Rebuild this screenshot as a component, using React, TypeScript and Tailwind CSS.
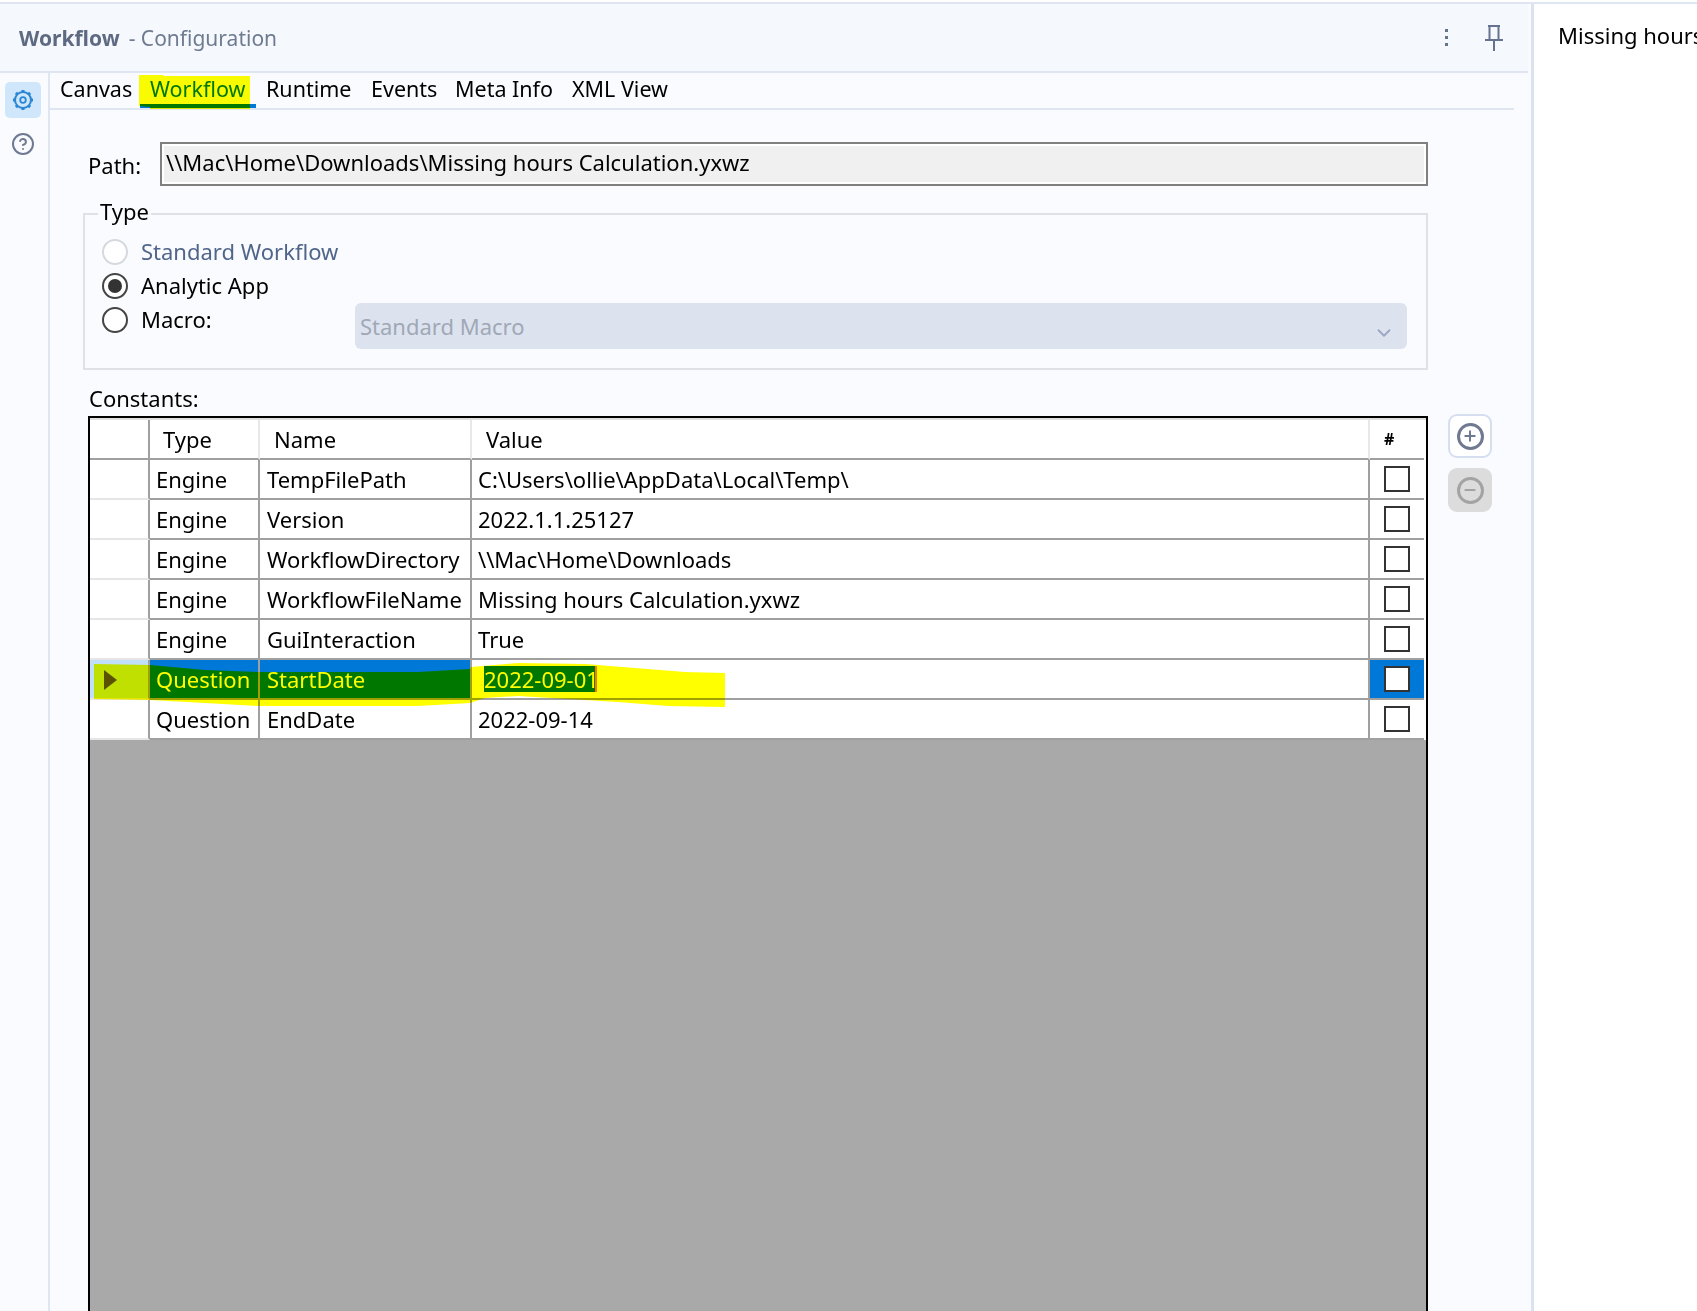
import { CircleHelp, ChevronDown, Plus, Minus } from 'lucide-react';

const tabs = [
  { label: 'Canvas', width: 'w-[90px]' },
  { label: 'Workflow', width: 'w-[116px]' },
  { label: 'Runtime', width: 'w-[105px]' },
  { label: 'Events', width: 'w-[84px]' },
  { label: 'Meta Info', width: 'w-[117px]' },
  { label: 'XML View', width: 'w-[110px]' },
];

const rows = [
  { type: 'Engine', name: 'TempFilePath', value: 'C:\\Users\\ollie\\AppData\\Local\\Temp\\' },
  { type: 'Engine', name: 'Version', value: '2022.1.1.25127' },
  { type: 'Engine', name: 'WorkflowDirectory', value: '\\\\Mac\\Home\\Downloads' },
  { type: 'Engine', name: 'WorkflowFileName', value: 'Missing hours Calculation.yxwz' },
  { type: 'Engine', name: 'GuiInteraction', value: 'True' },
];

const gridCols = 'grid grid-cols-[60px_110px_212px_898px_54px]';

const GearIcon = () => (
  <svg width="26" height="26" viewBox="0 0 26 26" fill="none" stroke="#2a86d4">
    <circle cx="13" cy="13" r="8" strokeWidth="2" />
    <circle cx="13" cy="13" r="2.8" strokeWidth="1.8" />
    <path
      strokeWidth="3"
      d="M13 3v2M13 21v2M3 13h2M21 13h2M5.9 5.9l1.4 1.4M18.7 18.7l1.4 1.4M20.1 5.9l-1.4 1.4M7.3 18.7l-1.4 1.4"
    />
  </svg>
);

const Radio = ({ checked, disabled }: { checked?: boolean; disabled?: boolean }) => (
  <span
    className={`flex w-[26px] h-[26px] shrink-0 items-center justify-center rounded-full border-2 ${
      disabled ? 'border-[#d5d9df] bg-white' : 'border-[#444] bg-white'
    }`}
  >
    {checked && <span className="w-[14px] h-[14px] rounded-full bg-[#333]" />}
  </span>
);

const Checkbox = () => (
  <span className="block w-[26px] h-[26px] border-2 border-[#333] bg-white" />
);

const PlainRow = ({ type, name, value }: { type: string; name: string; value: string }) => (
  <div className={`${gridCols} h-[40px] bg-white`}>
    <div className="border-r-2 border-b-2 border-r-[#a0a0a0] border-b-[#e6e6e6]" />
    <div className="flex items-center pl-[6px] border-r-2 border-b-2 border-[#a0a0a0]">{type}</div>
    <div className="flex items-center pl-[7px] border-r-2 border-b-2 border-[#a0a0a0] whitespace-nowrap">{name}</div>
    <div className="flex items-center pl-[6px] border-r-2 border-b-2 border-[#a0a0a0]">{value}</div>
    <div className="flex items-center pl-[14px] border-b-2 border-[#a0a0a0]">
      <Checkbox />
    </div>
  </div>
);

const SelectedRow = () => (
  <div className={`${gridCols} relative h-[40px] bg-white`}>
    <div className="flex items-center pl-[13px] pt-[2px] border-r-2 border-b-2 border-r-[#a0a0a0] border-b-[#e6e6e6] bg-[#bfe0f7]">
      <svg width="14" height="20" viewBox="0 0 14 20">
        <polygon points="1,0 14,10 1,20" fill="#5a5200" />
      </svg>
    </div>
    <div className="flex items-center pl-[6px] border-r-2 border-b-2 border-[#a0a0a0] bg-[#0078d7] text-white">Question</div>
    <div className="flex items-center pl-[7px] border-r-2 border-b-2 border-[#a0a0a0] bg-[#0078d7] text-white">StartDate</div>
    <div className="flex items-center pl-[12px] border-r-2 border-b-2 border-[#a0a0a0]">
      <span className="flex items-center h-[26px] w-[113px] bg-[#0078d7] text-white border-r-2 border-[#ff7a00] whitespace-nowrap">2022-09-01</span>
    </div>
    <div className="flex items-center pl-[14px] border-b-2 border-[#a0a0a0] bg-[#0078d7]">
      <Checkbox />
    </div>
    <svg
      className="absolute left-0 top-0 overflow-visible pointer-events-none mix-blend-multiply"
      width="640"
      height="50"
      viewBox="0 0 640 50"
    >
      <polygon
        fill="#ffff00"
        points="4,4 60,5 115,10 168,12 328,12 380,9 381,7 428,3 495,4 545,8 595,12 635,13 635,47 578,46 528,42 461,38 428,36 395,38 380,43 328,46 168,46 115,43 60,40 4,39"
      />
    </svg>
  </div>
);

export default function App() {
  return (
    <div className="w-[1697px] h-[1311px] overflow-hidden bg-white text-[22px] leading-[28px] text-black font-['Noto_Sans',sans-serif]">
      <div className="h-[2px]" />
      <div className="h-[2px] bg-[#dfe6f2]" />
      <div className="flex h-[1307px]">
        <div className="flex flex-col w-[1534px] shrink-0 border-r-[3px] border-[#dce3f0] bg-[#f9fbfe]">
          <header className="flex items-center justify-between h-[69px] shrink-0 mr-[3px] pl-[19px] pr-[25px] bg-[#f5f8fd] border-b-2 border-[#dfe6f2]">
            <div className="text-[#6f7b90] text-[21px]">
              <span className="font-bold text-[#5d6a82]">Workflow</span>
              <span className="ml-[9px]">- Configuration</span>
            </div>
            <div className="flex items-center gap-[37px]">
              <span className="flex flex-col gap-[3.5px]">
                <span className="w-[3.5px] h-[3.5px] bg-[#66738f]" />
                <span className="w-[3.5px] h-[3.5px] bg-[#66738f]" />
                <span className="w-[3.5px] h-[3.5px] bg-[#66738f]" />
              </span>
              <svg width="18" height="26" viewBox="0 0 18 26" fill="none" stroke="#66738f" strokeWidth="2">
                <path d="M3 1h12M4.5 1v13M13.5 1v13M0 15h18M9 15v11" />
              </svg>
            </div>
          </header>
          <div className="flex flex-1 min-h-0">
            <aside className="flex flex-col items-center w-[50px] shrink-0 pl-0 pr-[2px] border-r-2 border-[#dfe6f2]">
              <div className="flex items-center justify-center mt-[9px] w-[36px] h-[36px] rounded-[5px] bg-[#cfe6fb]">
                <GearIcon />
              </div>
              <CircleHelp size={24} strokeWidth={2} className="mt-[14px] text-[#6f7a92]" />
            </aside>
            <div className="flex-1 min-w-0">
              <nav className="flex items-center h-[37px] mr-[17px] pl-[10px] border-b-2 border-[#dfe6f2] text-[21.5px]">
                {tabs.map((tab) =>
                  tab.label === 'Workflow' ? (
                    <div key={tab.label} className={`relative ${tab.width} h-full pb-[3px] flex items-center text-[#0078d7] whitespace-nowrap`}>
                      <span>{tab.label}</span>
                      <span className="absolute left-[-10px] top-[31px] w-[116px] h-[4px] bg-[#0078d7]" />
                      <svg
                        className="absolute left-[-11px] top-0 overflow-visible pointer-events-none mix-blend-multiply"
                        width="112"
                        height="36"
                        viewBox="0 0 112 36"
                      >
                        <polygon fill="#ffff00" points="0,2 24,2 25,3 111,3 111,36 11,36 11,34 0,33" />
                      </svg>
                    </div>
                  ) : (
                    <div key={tab.label} className={`${tab.width} h-full pb-[3px] flex items-center whitespace-nowrap`}>
                      {tab.label}
                    </div>
                  ),
                )}
              </nav>
              <div className="pl-[33px]">
                <div className="flex w-[1345px] pt-[32px]">
                  <label className="w-[77px] pl-[5px] pt-[9px]">Path:</label>
                  <div className="flex items-center flex-1 h-[44px] pl-[4px] pb-[4px] border-2 border-[#808080] bg-[#f0f0f0] shadow-[inset_0_0_0_2px_#ffffff]">
                    {'\\\\Mac\\Home\\Downloads\\Missing hours Calculation.yxwz'}
                  </div>
                </div>

                <fieldset className="relative flex w-[1345px] h-[157px] mt-[27px] border-2 border-[#dfe1e6]">
                  <span className="absolute left-[13px] top-[-18px] px-[2px] bg-[#f9fbfe]">Type</span>
                  <div className="flex flex-col w-[270px] pl-[17px] pt-[20px]">
                    <div className="flex items-center gap-[13px] h-[34px] text-[#50658a]">
                      <Radio disabled />
                      <span className="pb-[2px]">Standard Workflow</span>
                    </div>
                    <div className="flex items-center gap-[13px] h-[34px]">
                      <Radio checked />
                      <span className="pb-[2px]">Analytic App</span>
                    </div>
                    <div className="flex items-center gap-[13px] h-[34px]">
                      <Radio />
                      <span className="pb-[2px]">Macro:</span>
                    </div>
                  </div>
                  <div className="relative flex items-center w-[1052px] h-[46px] mt-[88px] pl-[5px] rounded-[6px] bg-[#dce3ef] text-[#a0a8b6]">
                    Standard Macro
                    <ChevronDown size={22} className="absolute right-[12px] top-[19px] text-[#9aa6c2]" />
                  </div>
                </fieldset>

                <div className="mt-[18px] ml-[6px] h-[20px] leading-[20px]">Constants:</div>

                <div className="flex mt-[8px] ml-[5px]">
                  <div className="w-[1340px] h-[900px] shrink-0 border-2 border-black bg-[#a9a9a9]">
                    <div className="w-[1336px]">
                      <div className="h-[2px] bg-[#e0e0e0]" />
                      <div className={`${gridCols} h-[40px] bg-white`}>
                        <div className="border-r-2 border-b-2 border-r-[#a0a0a0] border-b-[#a0a0a0]" />
                        <div className="flex items-center pl-[13px] border-r-2 border-b-2 border-r-[#e8e8e8] border-b-[#a0a0a0]">Type</div>
                        <div className="flex items-center pl-[14px] border-r-2 border-b-2 border-r-[#e8e8e8] border-b-[#a0a0a0]">Name</div>
                        <div className="flex items-center pl-[14px] border-r-2 border-b-2 border-r-[#e8e8e8] border-b-[#a0a0a0]">Value</div>
                        <div className="flex items-center pl-[14px] border-b-2 border-[#a0a0a0] text-[16px] font-bold">#</div>
                      </div>
                      {rows.map((row) => (
                        <PlainRow key={row.name} {...row} />
                      ))}
                      <SelectedRow />
                      <PlainRow type="Question" name="EndDate" value="2022-09-14" />
                    </div>
                  </div>
                  <div className="flex flex-col gap-[10px] ml-[20px] mt-[-2px]">
                    <button className="flex items-center justify-center w-[44px] h-[44px] rounded-[9px] border-2 border-[#d5dfef] bg-white">
                      <span className="flex items-center justify-center w-[27px] h-[27px] rounded-full border-[3px] border-[#6f7a92]">
                        <Plus size={16} strokeWidth={3} className="text-[#6f7a92]" />
                      </span>
                    </button>
                    <button className="flex items-center justify-center w-[44px] h-[44px] rounded-[9px] bg-[#dcdcdc]">
                      <span className="flex items-center justify-center w-[27px] h-[27px] rounded-full border-[3px] border-[#a3a3a3]">
                        <Minus size={16} strokeWidth={3} className="text-[#a3a3a3]" />
                      </span>
                    </button>
                  </div>
                </div>
              </div>
            </div>
          </div>
        </div>
        <div className="flex-1 min-w-0 overflow-hidden pl-[24px] pt-[17px] whitespace-nowrap">
          Missing hours Calculation.yxwz
        </div>
      </div>
    </div>
  );
}
